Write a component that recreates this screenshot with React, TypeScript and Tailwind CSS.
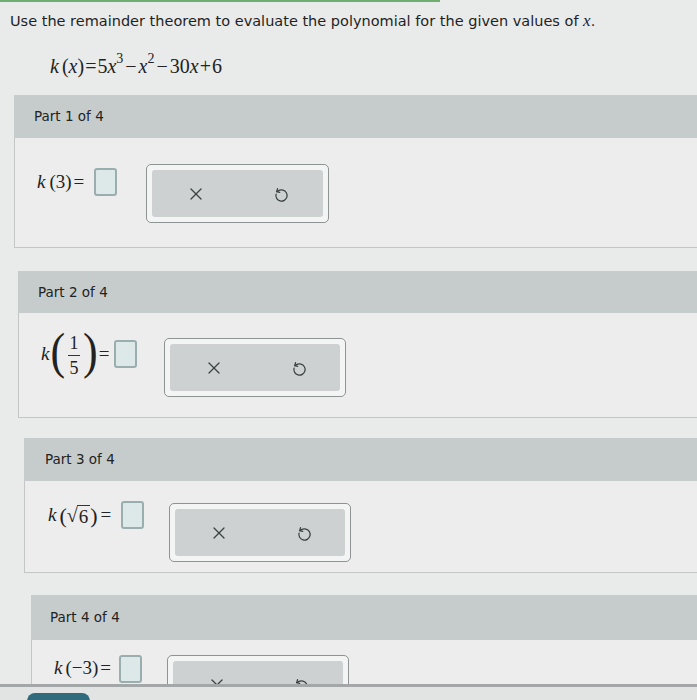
import React from "react";
import { X, RotateCcw } from "lucide-react";

const serif = { fontFamily: '"Liberation Serif", "Times New Roman", serif' };

function AnswerBox({ className = "" }: { className?: string }) {
  return (
    <div
      className={
        "w-[23px] h-[28px] rounded-[3px] border-2 border-[#9aaeb0] bg-[#dde8e8] shrink-0 " +
        className
      }
    />
  );
}

function ButtonGroup({ className = "" }: { className?: string }) {
  return (
    <div
      className={
        "w-[182px] h-[59px] rounded-[5px] border border-[#8e9394] bg-[#f3f4f4] p-[5px] shrink-0 " +
        className
      }
    >
      <div className="w-full h-full rounded-[3px] bg-[#cdd1d1] flex items-center justify-around">
        <X size={20} strokeWidth={1.5} className="text-[#3a4142]" />
        <RotateCcw size={15} strokeWidth={2} className="text-[#3a4142] mt-[3px] rotate-[15deg]" />
      </div>
    </div>
  );
}

function Header({ label, h, pl }: { label: string; h: string; pl: string }) {
  return (
    <div className={"bg-[#c6cccc] flex items-center text-[13.5px] text-[#222] " + h + " " + pl} style={{ fontFamily: '"DejaVu Sans", Verdana, sans-serif' }}>
      {label}
    </div>
  );
}

export default function App() {
  return (
    <div className="w-[697px] h-[700px] overflow-hidden bg-[#e9eaea] relative flex flex-col">
      <div className="h-[2px] w-[440px] bg-[#6fae6f]" />
      <div
        className="pl-[10px] pt-[6px] text-[14.5px] text-[#1f1f1f]"
        style={{ fontFamily: '"DejaVu Sans", Verdana, sans-serif' }}
      >
        Use the remainder theorem to evaluate the polynomial for the given values of{" "}
        <span className="italic text-[17px]" style={serif}>x</span>.
      </div>
      <div className="pl-[50px] pt-[18px] h-[72px] text-[20px] text-[#222] flex items-baseline" style={serif}>
        <span className="italic">k</span>
        <span className="ml-[3px]">(</span>
        <span className="italic">x</span>
        <span>)</span>
        <span className="mx-[1px]">=</span>
        <span>5</span>
        <span className="italic">x</span>
        <span className="text-[14px] relative -top-[10px]">3</span>
        <span className="mx-[2px]">−</span>
        <span className="italic">x</span>
        <span className="text-[14px] relative -top-[10px]">2</span>
        <span className="mx-[2px]">−</span>
        <span>30</span>
        <span className="italic">x</span>
        <span className="mx-[1px]">+</span>
        <span>6</span>
      </div>

      {/* Part 1 */}
      <div className="ml-[14px]">
        <Header label="Part 1 of 4" h="h-[43px]" pl="pl-[20px]" />
        <div className="h-[110px] bg-[#ededed] border-l border-b border-[#c4c6c6] pl-[22px] pt-[26px] flex items-start">
          <div className="flex items-center mt-[4px] text-[19px] text-[#222] h-[28px]" style={serif}>
            <span className="italic">k</span>
            <span className="ml-[4px]">(3)</span>
            <span className="ml-[2px]">=</span>
            <AnswerBox className="ml-[10px]" />
          </div>
          <ButtonGroup className="ml-[29px] w-[183px]" />
        </div>
      </div>

      {/* Part 2 */}
      <div className="ml-[18px] mt-[23px]">
        <Header label="Part 2 of 4" h="h-[42px]" pl="pl-[20px]" />
        <div className="h-[105px] bg-[#ededed] border-l border-b border-[#c4c6c6] pl-[22px] pt-[25px] flex items-start">
          <div className="flex items-center text-[19px] text-[#222] h-[32px]" style={serif}>
            <span className="italic">k</span>
            <span className="text-[44px] leading-none scale-y-[1.15] -mt-[4px] ml-[1px]">(</span>
            <span className="flex flex-col items-center leading-none text-[18px] mx-[3px] mt-[2px]">
              <span>1</span>
              <span className="w-[12px] h-px bg-[#333] my-[3px]" />
              <span>5</span>
            </span>
            <span className="text-[44px] leading-none scale-y-[1.15] -mt-[4px]">)</span>
            <span className="ml-[1px]">=</span>
            <AnswerBox className="ml-[5px]" />
          </div>
          <ButtonGroup className="ml-[27px] w-[178px] h-[57px]" />
        </div>
      </div>

      {/* Part 3 */}
      <div className="ml-[24px] mt-[20px]">
        <Header label="Part 3 of 4" h="h-[43px]" pl="pl-[21px]" />
        <div className="h-[92px] bg-[#ededed] border-l border-b border-[#c4c6c6] pl-[23px] pt-[20px] flex items-start">
          <div className="flex items-center text-[19px] text-[#222] h-[28px]" style={serif}>
            <span className="italic">k</span>
            <span className="ml-[3px] text-[22px]">(</span>
            <span className="text-[20px]">√</span>
            <span className="border-t border-[#333] leading-none pt-[1px] -ml-[1px] px-[2px]">6</span>
            <span className="text-[22px]">)</span>
            <span className="ml-[3px]">=</span>
            <AnswerBox className="ml-[10px]" />
          </div>
          <ButtonGroup className="ml-[25px] mt-[2px] w-[173px] h-[52px]" />
        </div>
      </div>

      {/* Part 4 */}
      <div className="ml-[31px] mt-[22px]">
        <Header label="Part 4 of 4" h="h-[45px]" pl="pl-[19px]" />
        <div className="h-[60px] bg-[#ededed] border-l border-[#c4c6c6] pl-[22px] pt-[15px] flex items-start">
          <div className="flex items-center text-[19px] text-[#222] h-[27px]" style={serif}>
            <span className="italic">k</span>
            <span className="ml-[3px]">(−3)</span>
            <span className="ml-[2px]">=</span>
            <AnswerBox className="ml-[8px]" />
          </div>
          <ButtonGroup className="ml-[25px] w-[170px]" />
        </div>
      </div>

      {/* bottom bar */}
      <div className="absolute left-0 right-0 top-[684px] h-[16px] bg-[#e2e4e4] border-t-[3px] border-[#a3a7a7]">
        <div className="absolute left-[27px] top-[6px] w-[63px] h-[14px] rounded-t-[8px] bg-[#2f6b7c]" />
      </div>
    </div>
  );
}
